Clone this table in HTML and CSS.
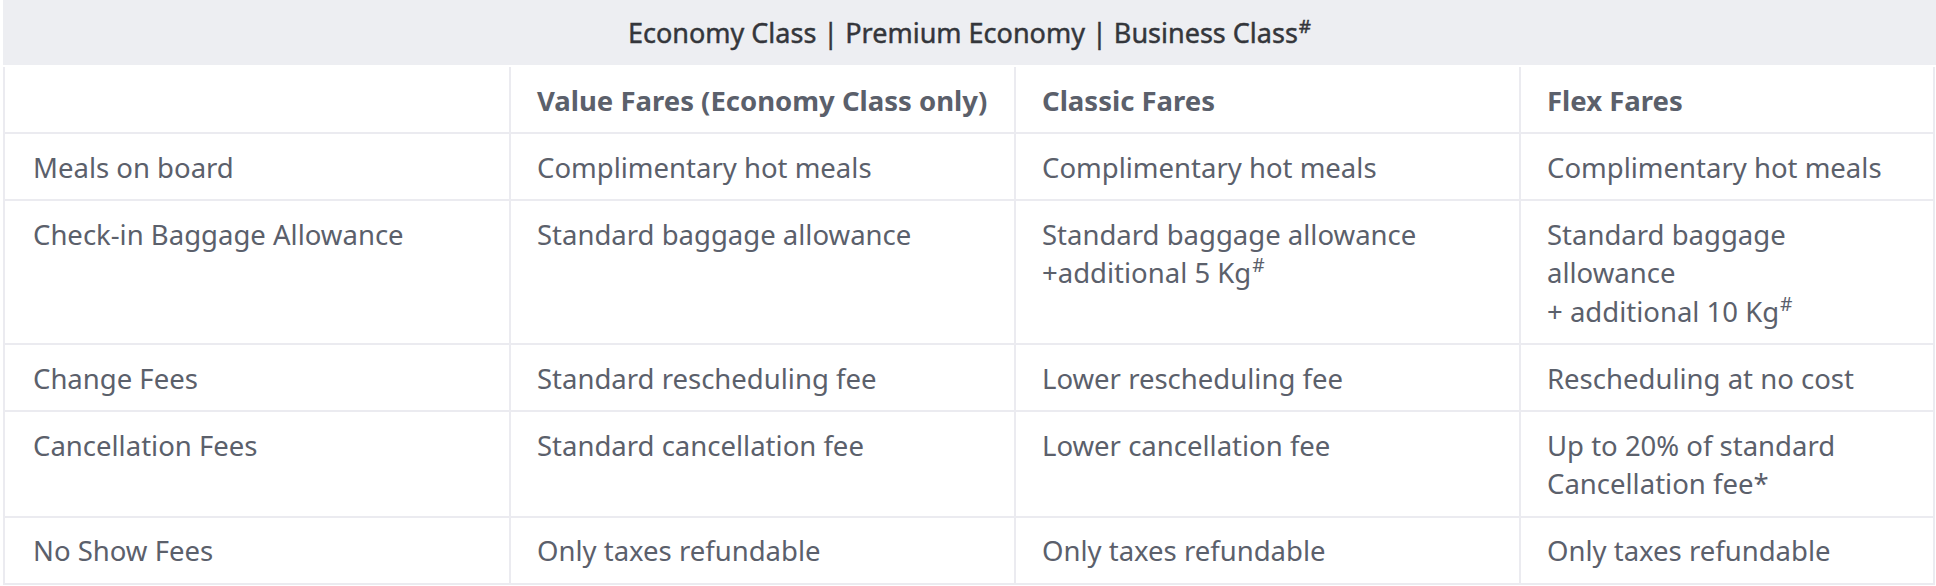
FILE: index.html
```html
<!DOCTYPE html>
<html lang="en">
<head>
<meta charset="utf-8">
<title>Fare comparison</title>
<link rel="stylesheet" href="styles.css">
</head>
<body>
<div class="fares">
  <div class="fares-title"><span class="fares-title-text">Economy Class | Premium Economy | Business Class<sup>#</sup></span></div>
  <table class="fares-table">
    <colgroup>
      <col class="c-label">
      <col class="c-fare">
      <col class="c-fare">
      <col class="c-last">
    </colgroup>
    <thead>
      <tr>
        <th class="label"></th>
        <th>Value Fares (Economy Class only)</th>
        <th>Classic Fares</th>
        <th>Flex Fares</th>
      </tr>
    </thead>
    <tbody>
      <tr>
        <td class="label">Meals on board</td>
        <td>Complimentary hot meals</td>
        <td>Complimentary hot meals</td>
        <td>Complimentary hot meals</td>
      </tr>
      <tr>
        <td class="label">Check-in Baggage Allowance</td>
        <td>Standard baggage allowance</td>
        <td>Standard baggage allowance<br>+additional 5 Kg<sup>#</sup></td>
        <td>Standard baggage allowance<br>+ additional 10 Kg<sup>#</sup></td>
      </tr>
      <tr>
        <td class="label">Change Fees</td>
        <td>Standard rescheduling fee</td>
        <td>Lower rescheduling fee</td>
        <td>Rescheduling at no cost</td>
      </tr>
      <tr>
        <td class="label">Cancellation Fees</td>
        <td>Standard cancellation fee</td>
        <td>Lower cancellation fee</td>
        <td>Up to 20% of standard Cancellation fee*</td>
      </tr>
      <tr>
        <td class="label">No Show Fees</td>
        <td>Only taxes refundable</td>
        <td>Only taxes refundable</td>
        <td>Only taxes refundable</td>
      </tr>
    </tbody>
  </table>
</div>
</body>
</html>
```
FILE: styles.css
```css
html, body {
  margin: 0;
  padding: 0;
  background: #ffffff;
}

body {
  font-family: "Noto Sans", "Open Sans", sans-serif;
  font-size: 27.5px;
  line-height: 38.5px;
  color: #5b606b;
}

.fares {
  padding-left: 3px;
}

.fares-title {
  height: 65px;
  box-sizing: border-box;
  padding-top: 2px;
  display: flex;
  align-items: center;
  justify-content: center;
  background: #edeef2;
  color: #34363b;
  font-size: 27px;
  font-weight: 400;
}

.fares-title-text {
  -webkit-text-stroke: 0.45px currentColor;
}

.fares-title sup,
.fares-table sup {
  font-size: 0.7em;
  line-height: 0;
  vertical-align: 0.55em;
  margin-left: 1px;
}

.fares-table {
  width: 1932px;
  margin-top: 2px;
  table-layout: fixed;
  border-collapse: collapse;
  border-top: none;
}

.c-label { width: 506px; }
.c-fare { width: 505px; }
.c-last { width: 414px; }

.fares-table th,
.fares-table td {
  border: 2px solid #ebebf0;
  padding: 14.5px 26px 12px;
  text-align: left;
  vertical-align: top;
}

.fares-table .label {
  padding-left: 28px;
}

.fares-table thead th {
  border-top: none;
  font-weight: 700;
  color: #5b606b;
}
```
